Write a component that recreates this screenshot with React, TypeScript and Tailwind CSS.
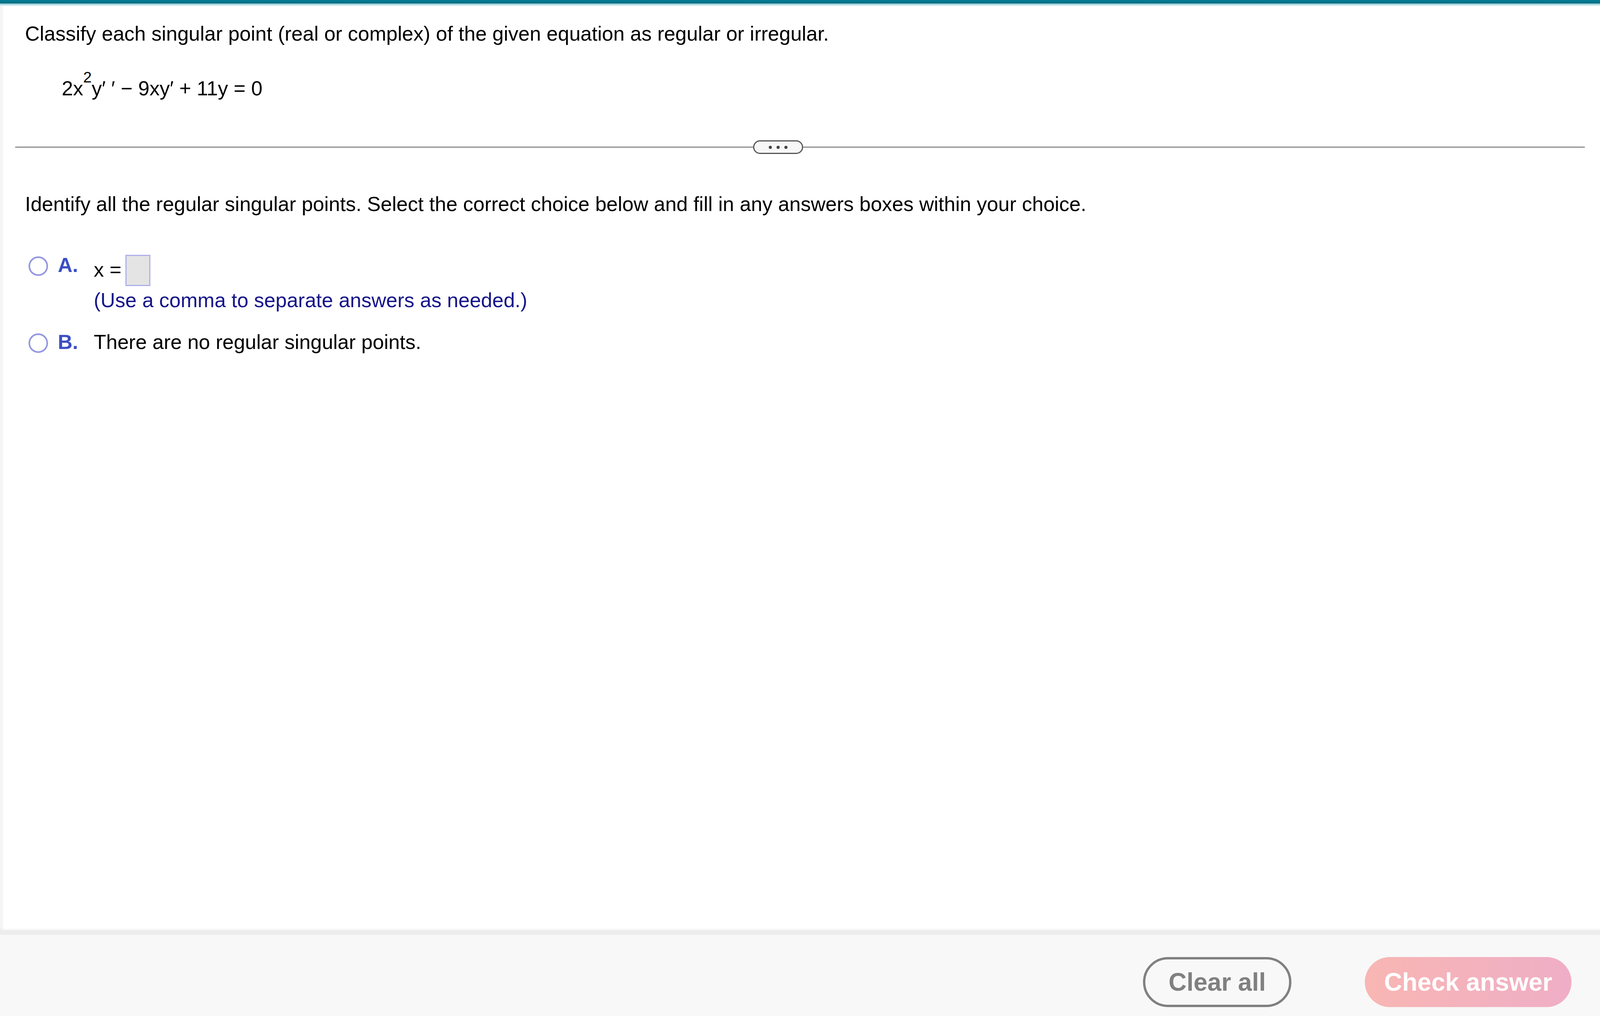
import React from "react";

function Radio() {
  return (
    <div className="mt-[9px] w-[50px] h-[50px] shrink-0 rounded-full border-[4px] border-[#9497e0] bg-white shadow-[inset_0_1px_2px_rgba(0,0,0,0.08)]" />
  );
}

export default function App() {
  return (
    <div className="w-full h-[2651px] flex flex-col bg-white text-black font-['Liberation_Sans',Arial,sans-serif]">
      {/* top bar */}
      <div className="h-[9px] bg-linear-to-b from-[#00809a] to-[#0a6a7e]" />
      <div className="h-[4px] bg-[#a6d5de]" />
      <div className="h-[3px] bg-[#e2f5f8]" />

      {/* main */}
      <div className="h-[2364px] flex">
        <div className="w-[8px] bg-[#f5f5f5]" />
        <div className="flex-1 flex flex-col pt-[39px]">
          <div className="pl-[56px] text-[52px] leading-[62px]">
            Classify each singular point (real or complex) of the given equation as regular or irregular.
          </div>

          <div className="mt-[78px] pl-[150px] text-[52px] leading-[62px] whitespace-pre">
            2x<span className="relative -top-[33px] text-[39px] leading-none">2</span>y′ ′ − 9xy′ + 11y = 0
          </div>

          <div className="mt-[102px] ml-[31px] mr-[39px] h-[35px] flex items-center">
            <div className="flex-1 h-[3px] bg-[#8e8e8e]" />
            <div className="w-[128px] h-[35px] shrink-0 rounded-full border-[3px] border-[#555555] bg-[#f7f7f7] flex items-center justify-center gap-[12px]">
              <div className="w-[8px] h-[8px] rounded-full bg-[#444444]" />
              <div className="w-[8px] h-[8px] rounded-full bg-[#444444]" />
              <div className="w-[8px] h-[8px] rounded-full bg-[#444444]" />
            </div>
            <div className="grow basis-[112px] h-[3px] bg-[#8e8e8e]" />
          </div>

          <div className="mt-[97px] pl-[56px] text-[52px] leading-[62px]">
            Identify all the regular singular points. Select the correct choice below and fill in any answers boxes within your choice.
          </div>

          {/* option A */}
          <div className="mt-[94px] pl-[65px] flex items-start">
            <Radio />
            <div className="ml-[25px] w-[92px] shrink-0 text-[52px] leading-[62px] font-bold text-[#3c4fc4]">A.</div>
            <div className="flex flex-col">
              <div className="flex items-start">
                <span className="mt-[12px] text-[52px] leading-[62px] whitespace-pre">x =</span>
                <div className="ml-[10px] mt-[5px] w-[64px] h-[80px] bg-[#e4e4e4] border-[3px] border-[#b0b0ea]" />
              </div>
              <div className="mt-[5px] text-[52px] leading-[62px] text-[#15158a]">
                (Use a comma to separate answers as needed.)
              </div>
            </div>
          </div>

          {/* option B */}
          <div className="mt-[45px] pl-[65px] flex items-start">
            <Radio />
            <div className="ml-[25px] w-[92px] shrink-0 text-[52px] leading-[62px] font-bold text-[#3c4fc4]">B.</div>
            <div className="text-[52px] leading-[62px]">There are no regular singular points.</div>
          </div>
        </div>
      </div>

      {/* footer */}
      <div className="h-[220px] border-t-[12px] border-[#ededed] bg-[#f8f8f8] shadow-[0_-3px_5px_rgba(0,0,0,0.04)] flex justify-end items-start pt-[57px] pr-[73px] gap-[188px]">
        <div className="w-[380px] h-[128px] rounded-full border-[6px] border-[#808080] flex items-center justify-center text-[64px] font-bold text-[#808080]">
          Clear all
        </div>
        <div className="w-[529px] h-[128px] rounded-full bg-linear-to-r from-[#f8b6b3] to-[#efaec6] flex items-center justify-center text-[64px] font-bold text-white">
          Check answer
        </div>
      </div>
      <div className="h-[51px] bg-white" />
    </div>
  );
}
